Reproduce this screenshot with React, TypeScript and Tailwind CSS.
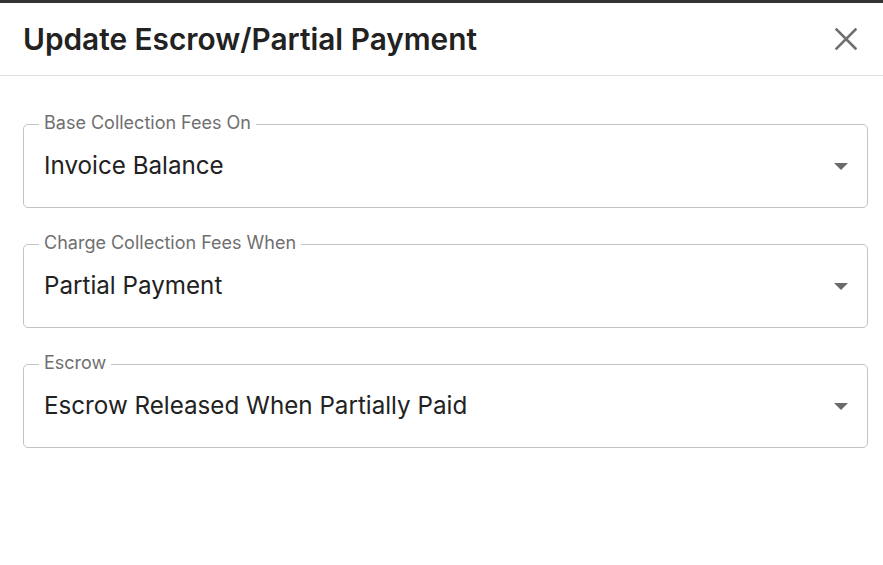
import React from "react";

function Field({ label, value }: { label: string; value: string }) {
  return (
    <div className="relative h-[84px] rounded-[5px] border border-[#c4c4c4] flex items-center pl-[20px] pr-[19px]">
      <span className="absolute left-[15px] top-[-13px] bg-white px-[5px] text-[18px] leading-[22px] text-[#6f6f6f]">
        {label}
      </span>
      <span className="text-[24.2px] text-[#222] flex-1 leading-[30px]">{value}</span>
      <svg width="14" height="7" viewBox="0 0 14 7">
        <path d="M0 0 L14 0 L7 7 Z" fill="#6b6b6b" />
      </svg>
    </div>
  );
}

export default function App() {
  return (
    <div className="w-[883px] h-[565px] bg-white overflow-hidden" style={{ fontFamily: "Inter, 'Noto Sans', sans-serif" }}>
      <div className="h-[3px] bg-[#333333]" />
      <div className="flex items-center justify-between h-[73px] border-b border-[#e0e0e0] pl-[23px] pr-[26px]">
        <h1 className="text-[29.8px] font-semibold text-[#222] leading-[36px]">Update Escrow/Partial Payment</h1>
        <svg width="22" height="22" viewBox="0 0 22 22">
          <path d="M1.5 1.5 L20.5 20.5 M20.5 1.5 L1.5 20.5" stroke="#6f6f6f" strokeWidth="2.6" strokeLinecap="square" />
        </svg>
      </div>
      <div className="flex flex-col gap-[36px] pl-[23px] pr-[15px] pt-[48px]">
        <Field label="Base Collection Fees On" value="Invoice Balance" />
        <Field label="Charge Collection Fees When" value="Partial Payment" />
        <Field label="Escrow" value="Escrow Released When Partially Paid" />
      </div>
    </div>
  );
}
